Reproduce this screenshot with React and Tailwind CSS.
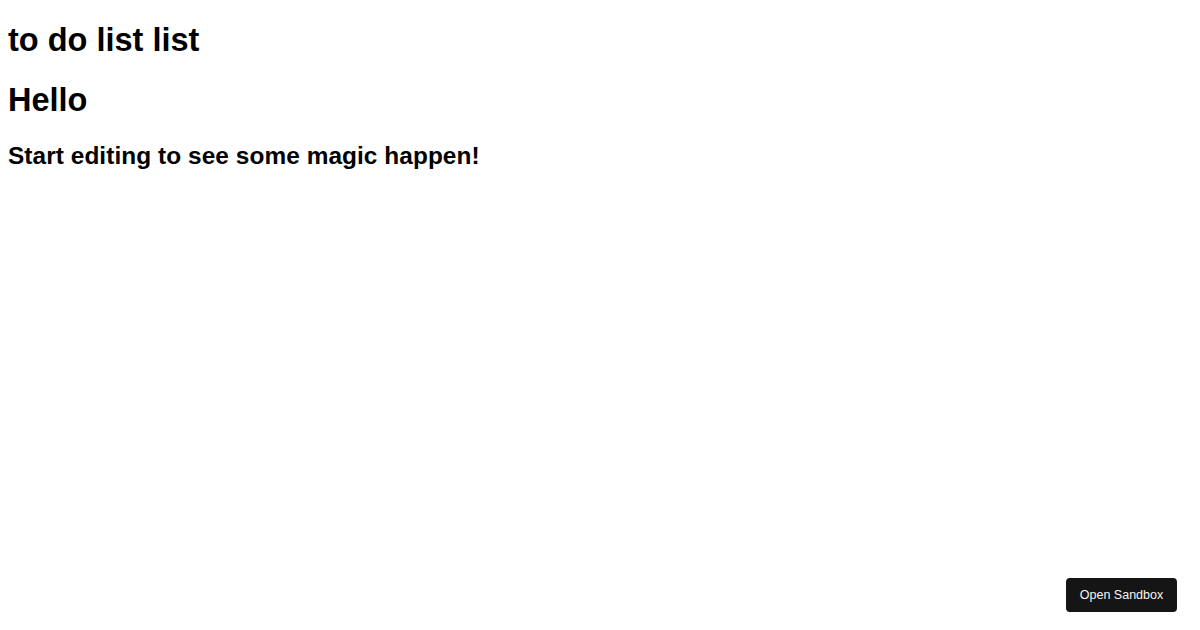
export default function App() {
  return (
    <div className="min-h-screen bg-white px-2 pt-px font-['Liberation_Sans',Arial,sans-serif] text-black">
      <h1 className="mt-[20px] mb-[21.44px] text-[32.5px] font-bold leading-[39px]">to do list list</h1>
      <h1 className="my-[21.44px] text-[32.5px] font-bold leading-[39px]">Hello</h1>
      <h2 className="mt-[20px] text-[24.4px] font-bold leading-[28px] tracking-[0.07px]">
        Start editing to see some magic happen!
      </h2>

      <button
        type="button"
        className="fixed bottom-[18px] right-[23px] h-[34px] w-[111px] rounded-[4px] bg-[#151515] text-[12.5px] text-[#f5f5f5]"
      >
        Open Sandbox
      </button>
    </div>
  );
}
